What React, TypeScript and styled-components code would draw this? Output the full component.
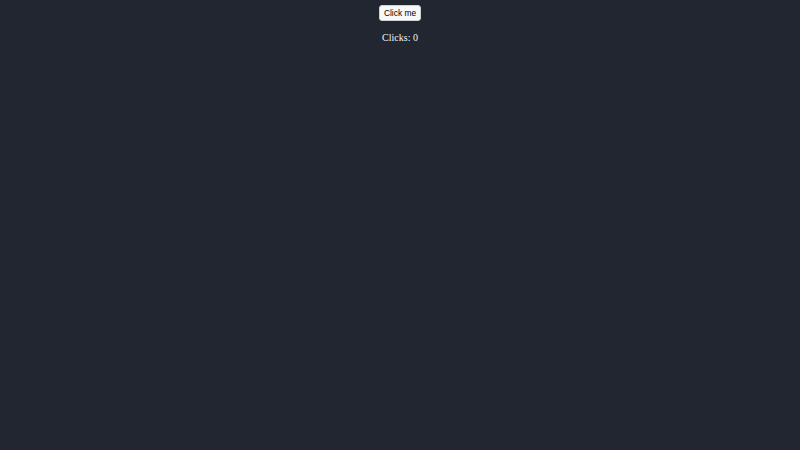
import styled, { createGlobalStyle } from 'styled-components'
import { useState } from 'react'

const GlobalStyle = createGlobalStyle`
  html, body {
    margin: 0;
    padding: 0;
    background: #222630;
  }
`

const Page = styled.div`
  min-height: 450px;
  padding-top: 5px;
  text-align: center;
  box-sizing: border-box;
`

const Button = styled.button`
  height: 16px;
  padding: 0 4px;
  border: 1px solid #d0d0d0;
  border-radius: 3px;
  background: #f8f8f8;
  color: #000;
  font-family: "Liberation Sans", Arial, sans-serif;
  font-size: 8.4px;
  line-height: 14px;
  cursor: pointer;
  vertical-align: top;
`

const Count = styled.p`
  margin: 8px 0 0;
  color: #f4f4f4;
  font-family: "Liberation Serif", "Times New Roman", serif;
  font-weight: 400;
  font-size: 10px;
  line-height: 13px;
`

export default function App() {
  const [clicks, setClicks] = useState(0)

  return (
    <>
      <GlobalStyle />
      <Page>
        <Button onClick={() => setClicks(clicks + 1)}>Click me</Button>
        <Count>Clicks: {clicks}</Count>
      </Page>
    </>
  )
}
